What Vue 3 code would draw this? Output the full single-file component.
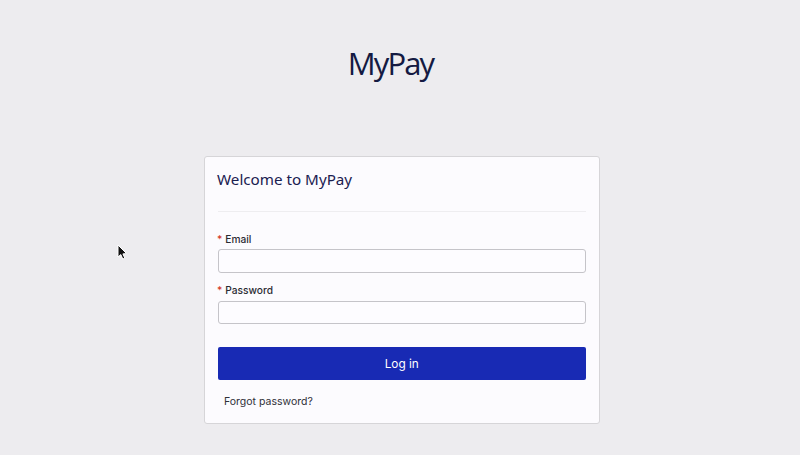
<script setup>
const fields = [
  { label: 'Email', type: 'email' },
  { label: 'Password', type: 'password' },
]
</script>

<template>
  <main class="page">
    <header class="brand">
      <h1 class="logo">MyPay</h1>
    </header>
    <section class="card">
      <h2 class="title">Welcome to MyPay</h2>
      <hr class="divider" />
      <form class="form" @submit.prevent>
        <div v-for="f in fields" :key="f.label" class="field">
          <label class="label"><span class="req">*</span>{{ f.label }}</label>
          <input class="input" :type="f.type" />
        </div>
        <button class="submit" type="submit">Log in</button>
      </form>
      <a class="forgot">Forgot password?</a>
    </section>
    <svg class="cursor" width="12" height="17" viewBox="0 0 12 17">
      <path d="M1 1 L1 13 L3.8 10.6 L5.8 15 L7.8 14.1 L5.9 9.9 L9.6 9.6 Z" fill="#111" stroke="#fff" stroke-width="1" stroke-linejoin="round" />
    </svg>
  </main>
</template>

<style>
html, body { margin: 0; background: #edecef; }
</style>

<style scoped>
.page {
  position: relative;
  width: 800px;
  height: 455px;
  overflow: hidden;
  background: #edecef;
  box-sizing: border-box;
  padding-top: 42px;
  font-family: Inter, "Liberation Sans", sans-serif;
}
.brand {
  display: flex;
  justify-content: center;
  padding-right: 19px;
  height: 114px;
}
.logo {
  margin: 0;
  font-family: "Open Sans", "Noto Sans", sans-serif;
  font-size: 31px;
  line-height: 42px;
  font-weight: 400;
  letter-spacing: -1.9px;
  color: #141a42;
}
.card {
  box-sizing: border-box;
  width: 396px;
  height: 268px;
  margin-left: 204px;
  padding: 12px 13px 0;
  background: #fcfbfe;
  border: 1px solid #d6d5d8;
  border-radius: 3px;
}
.title {
  margin: 0 0 0 -1px;
  font-family: "Noto Sans", "Open Sans", sans-serif;
  font-size: 15.2px;
  line-height: 21px;
  font-weight: 400;
  color: #1a2050;
}
.divider {
  margin: 21px 0 0;
  border: 0;
  border-top: 1px solid #eeedf0;
}
.form {
  display: flex;
  flex-direction: column;
  margin-top: 20px;
}
.field + .field { margin-top: 10px; }
.label {
  display: block;
  height: 16.5px;
  margin-left: -1px;
  font-size: 10.2px;
  line-height: 14px;
  font-weight: 500;
  color: #2b2b33;
}
.field + .field .label { height: 18.5px; }
.req {
  color: #d4402c;
  margin-right: 3px;
}
.input {
  display: block;
  box-sizing: border-box;
  width: 367.5px;
  height: 24px;
  padding: 0 8px;
  background: #fdfcff;
  border: 1px solid #c5c4c9;
  border-radius: 3px;
  outline: none;
}
.field + .field .input { height: 23px; }
.submit {
  width: 367.5px;
  height: 33px;
  margin-top: 23px;
  padding: 0;
  background: #182ab4;
  color: #fff;
  border: 0;
  border-radius: 2px;
  font-family: inherit;
  font-size: 11.8px;
  font-weight: 400;
}
.forgot {
  display: block;
  margin: 15px 0 0 6px;
  font-size: 10.5px;
  line-height: 14px;
  color: #2f2f38;
}
.cursor {
  position: absolute;
  left: 117px;
  top: 244px;
}
</style>
